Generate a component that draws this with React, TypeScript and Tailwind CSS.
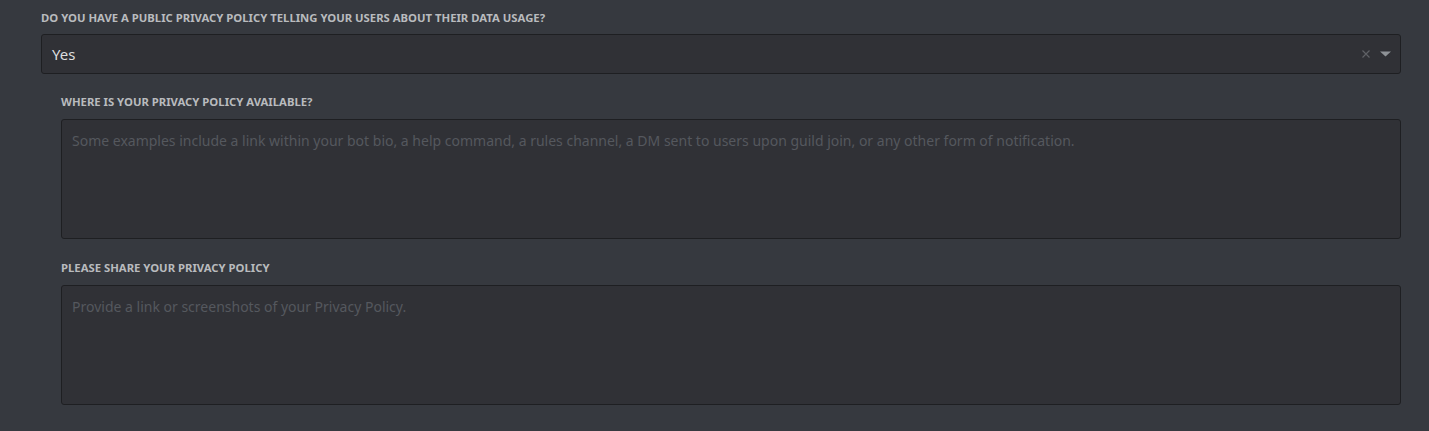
import React from "react";

export default function App() {
  return (
    <div
      className="w-full h-[431px] bg-[#36393f] pl-[41px] pr-[28px] pt-[11px]"
      style={{ fontFamily: '"Noto Sans", "Open Sans", sans-serif' }}
    >
      <div className="text-[11.3px] leading-[14px] font-bold uppercase text-[#b9bbbe]">
        Do you have a public privacy policy telling your users about their data usage?
      </div>
      <div className="mt-[9px] h-[40px] flex items-center justify-between rounded-[3px] border border-[#1e1f22] bg-[#303136] pl-[10px] pr-[9px]">
        <span className="text-[15px] text-[#dcddde]">Yes</span>
        <div className="flex items-center gap-[10px]">
          <svg width="8" height="8" viewBox="0 0 8 8">
            <path d="M0.5 0.5 L7.5 7.5 M7.5 0.5 L0.5 7.5" stroke="#5f6166" strokeWidth="1.2" />
          </svg>
          <svg width="11" height="6" viewBox="0 0 11 6">
            <path d="M0 0.5 L11 0.5 L5.5 5.5 Z" fill="#8e9297" />
          </svg>
        </div>
      </div>
      <div className="pl-[20px]">
        <div className="mt-[21px] text-[11.3px] leading-[14px] font-bold uppercase text-[#b9bbbe]">
          Where is your privacy policy available?
        </div>
        <textarea
          className="mt-[10px] block w-full h-[120px] resize-none rounded-[3px] border border-[#1e1f22] bg-[#303136] px-[10px] pt-[10px] text-[14px] leading-[22px] text-[#dcddde] placeholder:text-[#55585e] outline-none"
          placeholder="Some examples include a link within your bot bio, a help command, a rules channel, a DM sent to users upon guild join, or any other form of notification."
        />
        <div className="mt-[22px] text-[11.3px] leading-[14px] font-bold uppercase text-[#b9bbbe]">
          Please share your privacy policy
        </div>
        <textarea
          className="mt-[10px] block w-full h-[120px] resize-none rounded-[3px] border border-[#1e1f22] bg-[#303136] px-[10px] pt-[10px] text-[14px] leading-[22px] text-[#dcddde] placeholder:text-[#55585e] outline-none"
          placeholder="Provide a link or screenshots of your Privacy Policy."
        />
      </div>
    </div>
  );
}
